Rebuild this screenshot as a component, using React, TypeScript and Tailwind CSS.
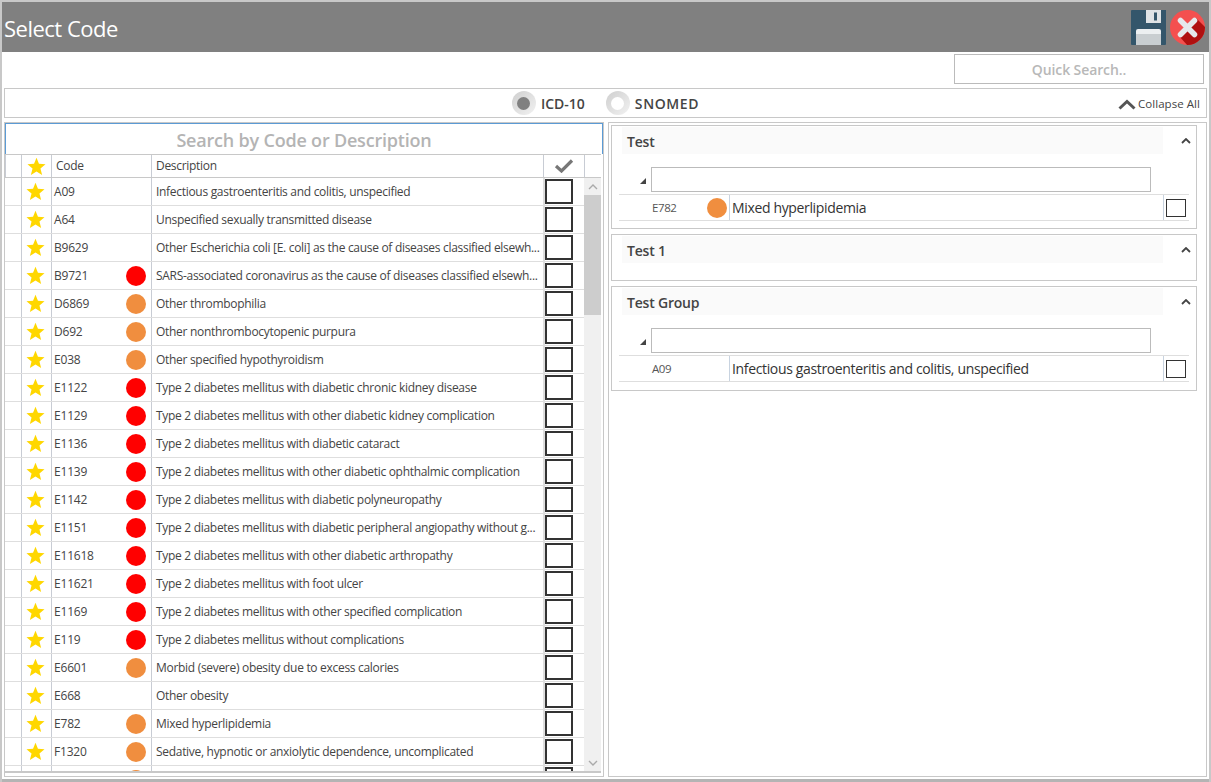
import React from "react";

const rows: [string, string, "" | "r" | "o"][] = [
  ["A09", "Infectious gastroenteritis and colitis, unspecified", ""],
  ["A64", "Unspecified sexually transmitted disease", ""],
  ["B9629", "Other Escherichia coli [E. coli] as the cause of diseases classified elsewh...", ""],
  ["B9721", "SARS-associated coronavirus as the cause of diseases classified elsewh...", "r"],
  ["D6869", "Other thrombophilia", "o"],
  ["D692", "Other nonthrombocytopenic purpura", "o"],
  ["E038", "Other specified hypothyroidism", "o"],
  ["E1122", "Type 2 diabetes mellitus with diabetic chronic kidney disease", "r"],
  ["E1129", "Type 2 diabetes mellitus with other diabetic kidney complication", "r"],
  ["E1136", "Type 2 diabetes mellitus with diabetic cataract", "r"],
  ["E1139", "Type 2 diabetes mellitus with other diabetic ophthalmic complication", "r"],
  ["E1142", "Type 2 diabetes mellitus with diabetic polyneuropathy", "r"],
  ["E1151", "Type 2 diabetes mellitus with diabetic peripheral angiopathy without g...", "r"],
  ["E11618", "Type 2 diabetes mellitus with other diabetic arthropathy", "r"],
  ["E11621", "Type 2 diabetes mellitus with foot ulcer", "r"],
  ["E1169", "Type 2 diabetes mellitus with other specified complication", "r"],
  ["E119", "Type 2 diabetes mellitus without complications", "r"],
  ["E6601", "Morbid (severe) obesity due to excess calories", "o"],
  ["E668", "Other obesity", ""],
  ["E782", "Mixed hyperlipidemia", "o"],
  ["F1320", "Sedative, hypnotic or anxiolytic dependence, uncomplicated", "o"],
  ["", "", "o"],
];

function Star({ size = 19 }: { size?: number }) {
  return (
    <svg width={size} height={size} viewBox="0 0 24 24" className="block">
      <polygon fill="#ffd700" points="12,1 15.1,8.6 23.4,9.2 17,14.5 19.1,22.6 12,18.2 4.9,22.6 7,14.5 0.6,9.2 8.9,8.6" />
    </svg>
  );
}

function Dot({ kind }: { kind: "" | "r" | "o" }) {
  if (!kind) return null;
  return <div className={kind === "r" ? "w-5 h-5 rounded-full bg-[#ff0000]" : "w-5 h-5 rounded-full bg-[#f08e3f]"} />;
}

function Chevron({ up, color = "#aaa", sw = 1.4 }: { up: boolean; color?: string; sw?: number }) {
  return (
    <svg width="10" height="6" viewBox="0 0 10 6" className="block">
      <path d={up ? "M1 5 L5 1 L9 5" : "M1 1 L5 5 L9 1"} fill="none" stroke={color} strokeWidth={sw} />
    </svg>
  );
}

function Floppy() {
  return (
    <svg width="35" height="35" viewBox="0 0 35 35" className="block">
      <path d="M1 0 H35 V34 a1 1 0 0 1 -1 1 H1 a1 1 0 0 1 -1 -1 V1 a1 1 0 0 1 1 -1Z" fill="#34566b" />
      <rect x="15" y="0" width="15" height="13" fill="#dfe3e6" />
      <rect x="23" y="2.5" width="3" height="8" fill="#34566b" />
      <path d="M5 21 a2 2 0 0 1 2 -2 H28 a2 2 0 0 1 2 2 V35 H5Z" fill="#eceff1" />
      <rect x="5" y="24" width="25" height="11" fill="#c9ced1" />
    </svg>
  );
}

function CloseIcon() {
  return (
    <svg width="35" height="35" viewBox="0 0 35 35" className="block">
      <defs>
        <clipPath id="closeclip">
          <circle cx="17.5" cy="17.5" r="17.5" />
        </clipPath>
      </defs>
      <circle cx="17.5" cy="17.5" r="17.5" fill="#f4504f" />
      <polygon clipPath="url(#closeclip)" points="26,8 36,18 36,36 18,36 9,26" fill="#b01010" />
      <path d="M10.5 10.5 L24.5 24.5 M24.5 10.5 L10.5 24.5" stroke="#e6e9ec" strokeWidth="5.5" strokeLinecap="round" />
    </svg>
  );
}

function Box({ cls = "" }: { cls?: string }) {
  return <div className={"border-2 border-[#333] bg-white " + cls} />;
}

function Radio({ on }: { on: boolean }) {
  return (
    <div className="w-6 h-6 rounded-full bg-gradient-to-br from-[#cfcfcf] to-[#f2f2f2] flex items-center justify-center">
      <div className={on ? "w-[13px] h-[13px] rounded-full bg-[#808080]" : "w-[13px] h-[13px] rounded-full bg-white"} />
    </div>
  );
}

function GroupHeader({ title }: { title: string }) {
  return (
    <div className="flex h-[27px] ml-[10px] mt-[1px] shrink-0">
      <div className="flex-1 bg-[#fafafa] flex items-center pl-[5px] pt-[2px] text-[14px] font-semibold text-[#444] tracking-[-0.2px]">
        {title}
      </div>
      <div className="w-[33px] flex items-center justify-center pl-[12px] pt-[1px]">
        <Chevron up color="#444" sw={1.8} />
      </div>
    </div>
  );
}

function GroupBody({ code, kind, desc }: { code: string; kind: "" | "r" | "o"; desc: string }) {
  return (
    <div className="pt-[13px]">
      <div className="flex items-center h-[25px]">
        <div className="w-[38px] flex justify-end pr-[4px] pt-[2px]">
          <div className="w-0 h-0 border-l-[6px] border-l-transparent border-b-[6px] border-b-[#444]" />
        </div>
        <div className="w-[500px] h-[25px] ml-[1px] border border-[#bbb] bg-white" />
      </div>
      <div className="mt-[2px] mx-[7px] h-[27px] border-y border-[#dedede] flex items-stretch w-[570px]">
        <div className="w-[33px]" />
        <div className="w-[55px] flex items-center text-[11.5px] text-[#555] tracking-[-0.4px]">{code}</div>
        <div className="w-[22px] flex items-center">
          <Dot kind={kind} />
        </div>
        <div className="w-[434px] border-l border-[#c8d3e0] flex items-center pl-[2px] text-[14px] text-[#333] tracking-[-0.35px]">
          {desc}
        </div>
        <div className="border-l border-[#c8d3e0] flex items-center pl-[2px]">
          <Box cls="w-[20px] h-[18px] !border-[1.5px]" />
        </div>
      </div>
    </div>
  );
}

export default function App() {
  return (
    <div
      className="w-[1211px] h-[782px] bg-white border-x-2 border-t-2 border-[#c8c8c8] flex flex-col overflow-hidden"
      style={{ fontFamily: '"Open Sans", "Noto Sans", sans-serif' }}
    >
      <div className="h-[50px] shrink-0 bg-[#808080] flex items-center justify-between pl-[2px] pr-[4px]">
        <div className="text-[22px] text-white tracking-[-0.5px] leading-none mt-[2px]">Select Code</div>
        <div className="flex gap-[4px] mt-[1px]">
          <Floppy />
          <CloseIcon />
        </div>
      </div>

      <div className="h-[36px] shrink-0 flex justify-end pt-[2px] pr-[5px]">
        <div className="w-[250px] h-[30px] border border-[#bbb] flex items-center justify-center text-[14px] font-semibold text-[#b8b8b8] tracking-[-0.1px]">
          Quick Search..
        </div>
      </div>

      <div className="h-[30px] shrink-0 mx-[2px] border border-[#c8c8c8] relative flex items-center justify-center">
        <div className="flex items-center">
          <Radio on />
          <span className="ml-[5px] mr-[21px] text-[14px] font-semibold text-[#444]">ICD-10</span>
          <Radio on={false} />
          <span className="ml-[5px] text-[14px] font-semibold text-[#444] tracking-[0.6px]">SNOMED</span>
        </div>
        <div className="absolute right-[6px] top-[1px] h-full flex items-center text-[11.5px] text-[#444] tracking-[0.05px]">
          <svg width="18" height="11" viewBox="0 0 18 11" className="block mr-[2px]">
            <path d="M1.5 9.5 L9 2.5 L16.5 9.5" fill="none" stroke="#555" strokeWidth="3" />
          </svg>
          Collapse All
        </div>
      </div>

      <div className="flex-1 min-h-0 mx-[2px] mt-[4px] mb-[2px] flex gap-[4px]">
        {/* Left */}
        <div className="w-[600px] shrink-0 border border-[#c8c8c8] flex flex-col">
          <div className="h-[31px] shrink-0 border border-[#5b9bd5] border-b-0 flex items-center justify-center pt-[2px] text-[18px] font-semibold text-[#b4b4b4] tracking-[-0.2px]">
            Search by Code or Description
          </div>
          <div className="flex-1 min-h-0 mr-[2px] mb-[3px] border-t border-b-2 border-[#c8c8c8] flex flex-col overflow-hidden">
            <div className="h-[23px] shrink-0 border-b border-[#c8c8c8] flex text-[12px] text-[#444]">
              <div className="w-[16px] border-l border-[#c8ccd4]" />
              <div className="w-[30px] border-l border-[#c8ccd4] flex items-center justify-center pt-[1px]">
                <Star size={19} />
              </div>
              <div className="w-[100px] border-l border-[#c8ccd4] flex items-center pl-[4px] tracking-[-0.3px]">Code</div>
              <div className="w-[392px] border-l border-[#c8ccd4] flex items-center pl-[4px] tracking-[-0.3px]">Description</div>
              <div className="w-[41px] border-l border-[#c8ccd4] flex items-center justify-center">
                <svg width="20" height="14" viewBox="0 0 20 14" className="block">
                  <path d="M2 7 L7.5 12 L18 1.5" fill="none" stroke="#777" strokeWidth="3.2" />
                </svg>
              </div>
              <div className="flex-1 border-l border-[#c8ccd4]" />
            </div>
            <div className="flex-1 min-h-0 flex overflow-hidden">
              <div className="flex-1 min-w-0 overflow-hidden">
                {rows.map((r, i) => (
                  <div key={i} className="h-[28px] shrink-0 flex border-b border-[#dedede] text-[12px] text-[#444]">
                    <div className="w-[16px]" />
                    <div className="w-[30px] border-l border-[#c8ccd4] flex items-center justify-center pr-[2px]">
                      <Star />
                    </div>
                    <div className="w-[100px] border-l border-[#c8ccd4] flex items-center pl-[2px] relative">
                      <span className="tracking-[-0.2px]">{r[0]}</span>
                      <div className="absolute left-[74px] top-[4px]">
                        <Dot kind={r[2]} />
                      </div>
                    </div>
                    <div className="w-[392px] border-l border-[#c8ccd4] flex items-center pl-[4px] whitespace-nowrap overflow-hidden tracking-[-0.3px]">
                      {r[1]}
                    </div>
                    <div className="flex-1 border-l-2 border-[#dedede] pt-[1px]">
                      <Box cls="w-[28px] h-[25px]" />
                    </div>
                  </div>
                ))}
              </div>
              <div className="w-[17px] shrink-0 bg-[#f0f0f0] flex flex-col">
                <div className="h-[17px] flex items-center justify-center">
                  <Chevron up />
                </div>
                <div className="h-[120px] bg-[#cdcdcd]" />
                <div className="flex-1" />
                <div className="h-[17px] flex items-center justify-center">
                  <Chevron up={false} />
                </div>
              </div>
            </div>
          </div>
        </div>

        {/* Right */}
        <div className="flex-1 min-w-0 border border-[#c8c8c8] pt-[2px] pl-[2px] pr-[9px] flex flex-col gap-[5px]">
          <div className="h-[104px] border border-[#c8c8c8]">
            <GroupHeader title="Test" />
            <GroupBody code="E782" kind="o" desc="Mixed hyperlipidemia" />
          </div>
          <div className="h-[47px] border border-[#c8c8c8]">
            <GroupHeader title="Test 1" />
          </div>
          <div className="h-[105px] border border-[#c8c8c8]">
            <GroupHeader title="Test Group" />
            <GroupBody code="A09" kind="" desc="Infectious gastroenteritis and colitis, unspecified" />
          </div>
        </div>
      </div>
      <div className="h-[3px] shrink-0 -mx-[2px] bg-[#b4b4b4]" />
    </div>
  );
}
